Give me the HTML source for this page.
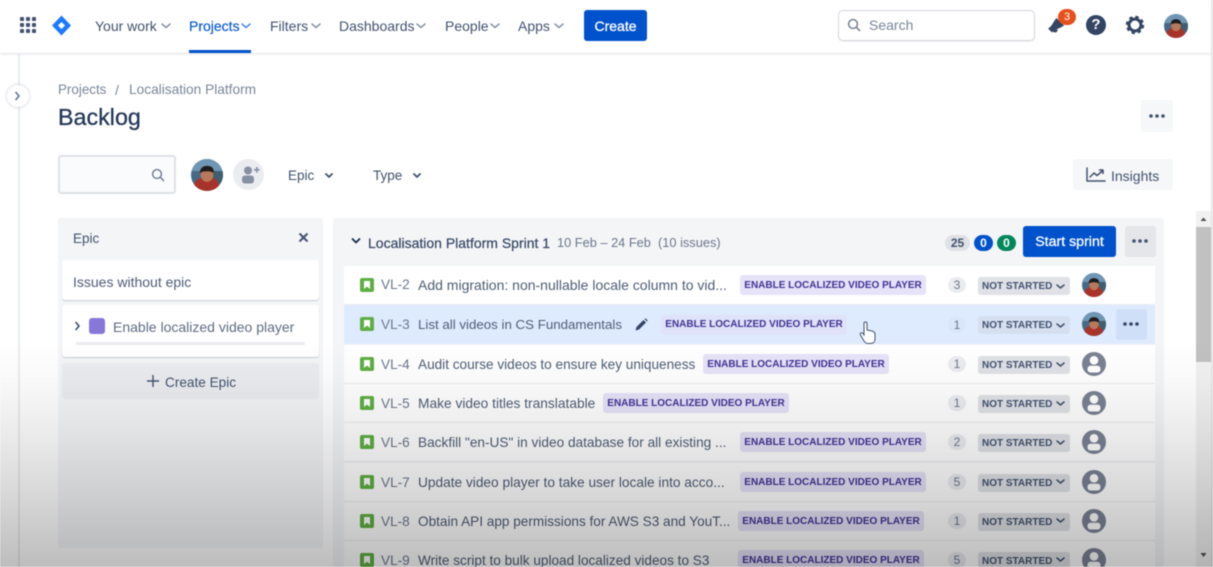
<!DOCTYPE html>
<html><head><meta charset="utf-8">
<style>
html,body{margin:0;padding:0;width:1213px;height:567px;overflow:hidden;background:#fff}
body{font-family:"Liberation Sans",sans-serif;color:#42526e;position:relative}
#p{position:absolute;left:0;top:0;width:1213px;height:567px;overflow:hidden;filter:blur(.4px)}
.a{position:absolute;white-space:nowrap}
.n{top:18px;font-size:14px;line-height:16px;color:#42526e}
.row{position:absolute;left:344px;width:811px;height:38px;background:#fff;border-bottom:1px solid #ebecf0}
.row>*{position:absolute;white-space:nowrap}
.ic{left:16px;top:12px;width:14px;height:14px;background:#5fae43;border-radius:2px}
.ic:after{content:"";position:absolute;left:4px;top:3px;width:6px;height:8px;background:#fff;clip-path:polygon(0 0,100% 0,100% 100%,50% 70%,0 100%)}
.k{left:37px;top:12px;font-size:13.6px;line-height:16px;color:#6b778c}
.t{left:74px;top:12px;font-size:13.7px;line-height:16px;color:#4f5d75}
.g{top:9px;height:20px;width:186px;background:#e6e2f8;border-radius:3px;font-size:10px;font-weight:bold;line-height:22px;color:#403294;text-align:center}
.e{left:604px;top:11px;width:18px;height:16px;background:#ebecf0;border-radius:8px;font-size:12px;line-height:16px;text-align:center;color:#6b778c}
.s{left:634px;top:11px;width:92px;height:18px;background:#dfe1e6;border-radius:3px;font-size:10px;font-weight:bold;line-height:20px;color:#42526e;padding-left:4px;box-sizing:border-box}
.av{left:738px;top:7px;width:24px;height:24px}
svg{display:block}
</style></head><body>
<div id="p">

<!-- top nav -->
<div class="a" style="left:0;top:0;width:1213px;height:53px;background:#fff;border-bottom:1px solid #e6e8ec;box-shadow:0 1px 2px rgba(9,30,66,.06)"></div>
<svg class="a" style="left:20px;top:17px" width="16" height="16" viewBox="0 0 16 16" fill="#42526e"><rect x="0" y="0" width="4" height="4" rx="1"/><rect x="6" y="0" width="4" height="4" rx="1"/><rect x="12" y="0" width="4" height="4" rx="1"/><rect x="0" y="6" width="4" height="4" rx="1"/><rect x="6" y="6" width="4" height="4" rx="1"/><rect x="12" y="6" width="4" height="4" rx="1"/><rect x="0" y="12" width="4" height="4" rx="1"/><rect x="6" y="12" width="4" height="4" rx="1"/><rect x="12" y="12" width="4" height="4" rx="1"/></svg>
<svg class="a" style="left:51px;top:15px" width="21" height="21" viewBox="0 0 21 21"><path d="M10.500 0.500L20 10.500L10.500 20.500L1 10.500Z" fill="#1d7afc"/><path d="M10.500 7L14 10.500L10.500 14L7 10.500Z" fill="#fff"/></svg>

<span class="a n" style="left:95px">Your work</span>
<span class="a n" style="left:189px;color:#0b5ccb;-webkit-text-stroke:.2px #0b5ccb">Projects</span>
<span class="a n" style="left:270px">Filters</span>
<span class="a n" style="left:339px">Dashboards</span>
<span class="a n" style="left:445px">People</span>
<span class="a n" style="left:518px">Apps</span>
<svg class="a" style="left:0;top:0" width="600" height="54" fill="none" stroke-width="1.500" stroke-linecap="round" stroke-linejoin="round">
<path d="M162 24l4 3.500 4-3.500M312 24l4 3.500 4-3.500M417 24l4 3.500 4-3.500M491 24l4 3.500 4-3.500M555 24l4 3.500 4-3.500" stroke="#8993a4"/>
<path d="M242 24l4 3.500 4-3.500" stroke="#4c8ae0"/>
</svg>
<div class="a" style="left:189px;top:50px;width:62px;height:3px;background:#0052cc"></div>
<div class="a" style="left:584px;top:10px;width:63px;height:31px;background:#0052cc;border-radius:3px;color:#fff;font-size:14px;-webkit-text-stroke:.3px #fff;line-height:32px;text-align:center">Create</div>

<!-- search -->
<div class="a" style="left:838px;top:10px;width:195px;height:29px;border:1px solid #d3d6dc;border-radius:5px;box-shadow:0 1px 1px rgba(9,30,66,.06)"></div>
<svg class="a" style="left:847px;top:18px" width="14" height="14" viewBox="0 0 14 14" fill="none" stroke="#6b778c" stroke-width="1.400"><circle cx="6" cy="6" r="4.400"/><path d="M9.400 9.400L13 13"/></svg>
<span class="a" style="left:869px;top:17px;font-size:14px;line-height:16px;color:#7a869a">Search</span>

<!-- right icons -->
<svg class="a" style="left:1047px;top:14px" width="20" height="21" viewBox="0 0 20 21"><path d="M1 14.500C4.500 13 6 8 9.500 4L17 11.500C13 14.500 8 15 5 18.500Z" fill="#344563"/><path d="M6.500 18a2.600 2.600 0 0 0 4-2.800L6 16.500Z" fill="#344563"/></svg>
<div class="a" style="left:1058px;top:9px;width:18px;height:16px;background:#e5501b;border-radius:8px;color:#fff;font-size:11px;line-height:16px;text-align:center">3</div>
<div class="a" style="left:1086px;top:15px;width:20px;height:20px;background:#344563;border-radius:50%;color:#fff;font-size:15px;font-weight:bold;line-height:20px;text-align:center">?</div>
<svg class="a" style="left:1125px;top:15px" width="20" height="20" viewBox="0 0 20 20" fill="none" stroke="#344563"><circle cx="10" cy="10" r="6" stroke-width="3"/><circle cx="10" cy="10" r="8" stroke-width="2.400" stroke-dasharray="3.300 3"/></svg>
<svg class="a" style="left:1164px;top:14px" width="24" height="24" viewBox="0 0 24 24"><use href="#face"/></svg>

<!-- left sidebar rail -->
<div class="a" style="left:18px;top:54px;width:2px;height:513px;background:#ebecf0"></div>
<div class="a" style="left:7px;top:85px;width:22px;height:22px;background:#fff;border-radius:50%;box-shadow:0 0 3px rgba(9,30,66,.25)"></div>
<svg class="a" style="left:14px;top:91px" width="8" height="10" fill="none" stroke="#6b778c" stroke-width="1.700" stroke-linecap="round" stroke-linejoin="round"><path d="M2 1.500l3 3.500-3 3.500"/></svg>

<!-- heading -->
<span class="a" style="left:58px;top:82px;font-size:13.400px;line-height:16px;color:#7a869a">Projects</span>
<span class="a" style="left:115px;top:82px;font-size:14px;line-height:16px;color:#7a869a">/</span>
<span class="a" style="left:129px;top:82px;font-size:13.700px;line-height:16px;color:#7a869a">Localisation Platform</span>
<span class="a" style="left:58px;top:103px;font-size:23.300px;line-height:28px;color:#253858;-webkit-text-stroke:.3px #253858">Backlog</span>
<div class="a" style="left:1141px;top:100px;width:32px;height:32px;background:#f6f7f8;border-radius:3px"></div>
<svg class="a" style="left:1148px;top:113px" width="18" height="6" fill="#42526e"><circle cx="3" cy="3" r="1.800"/><circle cx="9" cy="3" r="1.800"/><circle cx="15" cy="3" r="1.800"/></svg>

<!-- filter bar -->
<div class="a" style="left:58px;top:155px;width:114px;height:35px;background:#fafbfc;border:2px solid #dfe1e6;border-radius:3px"></div>
<svg class="a" style="left:151px;top:168px" width="14" height="14" viewBox="0 0 14 14" fill="none" stroke="#6b778c" stroke-width="1.400"><circle cx="6" cy="6" r="4.400"/><path d="M9.400 9.400L13 13"/></svg>
<svg class="a" style="left:191px;top:159px" width="32" height="32" viewBox="0 0 24 24"><use href="#face"/></svg>
<div class="a" style="left:233px;top:159px;width:31px;height:31px;background:#ebecf0;border-radius:50%"></div>
<svg class="a" style="left:240px;top:166px" width="20" height="18" viewBox="0 0 20 18" fill="#8590a2"><circle cx="8" cy="4.500" r="4"/><rect x="2" y="9.500" width="12" height="8" rx="3"/><path d="M14 3h2V1h1.600v2h2v1.600h-2v2H16v-2h-2z"/></svg>
<span class="a" style="left:288px;top:168px;font-size:13.500px;line-height:16px;color:#42526e">Epic</span>
<span class="a" style="left:373px;top:168px;font-size:13.500px;line-height:16px;color:#42526e">Type</span>
<svg class="a" style="left:0;top:150px" width="440" height="50" fill="none" stroke="#42526e" stroke-width="1.800" stroke-linecap="round" stroke-linejoin="round"><path d="M326 24l3 3 3-3M414 24l3 3 3-3"/></svg>
<div class="a" style="left:1073px;top:159px;width:100px;height:31px;background:#f6f7f8;border-radius:3px"></div>
<svg class="a" style="left:1086px;top:167px" width="20" height="16" viewBox="0 0 20 16" fill="none" stroke="#42526e" stroke-width="1.500" stroke-linejoin="round" stroke-linecap="round"><path d="M1 1v13h18M4 10l4-4 3 2.500 6-5M13.500 3h3.500v3.500"/></svg>
<span class="a" style="left:1111px;top:168px;font-size:14px;line-height:16px;color:#42526e">Insights</span>

<!-- epic panel -->
<div class="a" style="left:58px;top:218px;width:265px;height:330px;background:#f4f5f7;border-radius:3px"></div>
<span class="a" style="left:73px;top:231px;font-size:13.500px;line-height:16px;color:#42526e">Epic</span>
<svg class="a" style="left:298px;top:232px" width="11" height="11" fill="none" stroke="#42526e" stroke-width="2"><path d="M1.500 1.500l8 8M9.500 1.500l-8 8"/></svg>
<div class="a" style="left:62px;top:260px;width:257px;height:40px;background:#fff;border-radius:3px;box-shadow:0 1px 1px rgba(9,30,66,.2)"></div>
<span class="a" style="left:73px;top:274px;font-size:14px;line-height:16px;color:#4f5d75">Issues without epic</span>
<div class="a" style="left:62px;top:305px;width:257px;height:52px;background:#fff;border-radius:3px;box-shadow:0 1px 1px rgba(9,30,66,.2)"></div>
<svg class="a" style="left:74px;top:321px" width="8" height="10" fill="none" stroke="#42526e" stroke-width="1.700" stroke-linecap="round" stroke-linejoin="round"><path d="M2 1.500l3 3.500-3 3.500"/></svg>
<div class="a" style="left:89px;top:318px;width:16px;height:16px;background:#8777d9;border-radius:3px"></div>
<span class="a" style="left:113px;top:319px;font-size:14px;line-height:16px;color:#5e6c84">Enable localized video player</span>
<div class="a" style="left:76px;top:342px;width:229px;height:3px;background:#ebecf0;border-radius:2px"></div>
<div class="a" style="left:62px;top:363px;width:257px;height:36px;background:#ebecf0;border-radius:3px"></div>
<svg class="a" style="left:147px;top:375px" width="12" height="12" fill="none" stroke="#42526e" stroke-width="1.400"><path d="M6 0v12M0 6h12"/></svg>
<span class="a" style="left:165px;top:375px;font-size:13.600px;line-height:16px;color:#42526e">Create Epic</span>

<!-- sprint panel -->
<div class="a" style="left:333px;top:218px;width:831px;height:349px;background:#f4f5f7;border-radius:3px"></div>
<svg class="a" style="left:351px;top:237px" width="10" height="8" fill="none" stroke="#172b4d" stroke-width="1.800" stroke-linecap="round" stroke-linejoin="round"><path d="M1.500 2l3.500 3.500L8.500 2"/></svg>
<span class="a" style="left:368px;top:235px;font-size:14px;line-height:16px;color:#344563;-webkit-text-stroke:.2px #344563">Localisation Platform Sprint 1</span>
<span class="a" style="left:557px;top:235px;font-size:12.800px;line-height:16px;color:#6b778c">10 Feb – 24 Feb&nbsp; (10 issues)</span>
<div class="a" style="left:945px;top:235px;width:25px;height:16px;background:#dfe1e6;border-radius:8px;font-size:12px;font-weight:bold;line-height:16px;text-align:center;color:#42526e">25</div>
<div class="a" style="left:974px;top:235px;width:19px;height:16px;background:#0052cc;border-radius:8px;font-size:12px;font-weight:bold;line-height:16px;text-align:center;color:#fff">0</div>
<div class="a" style="left:997px;top:235px;width:19px;height:16px;background:#00875a;border-radius:8px;font-size:12px;font-weight:bold;line-height:16px;text-align:center;color:#fff">0</div>
<div class="a" style="left:1023px;top:226px;width:93px;height:31px;background:#0052cc;border-radius:3px;color:#fff;font-size:14.200px;-webkit-text-stroke:.3px #fff;line-height:32px;text-align:center">Start sprint</div>
<div class="a" style="left:1125px;top:226px;width:31px;height:31px;background:#e4e6ea;border-radius:3px"></div>
<svg class="a" style="left:1131px;top:238px" width="18" height="6" fill="#42526e"><circle cx="3" cy="3" r="1.800"/><circle cx="9" cy="3" r="1.800"/><circle cx="15" cy="3" r="1.800"/></svg>

<!-- rows -->
<div class="row" style="top:266px"><i class="ic"></i><span class="k" style="top:11px">VL-2</span><span class="t" style="font-size:14px;top:11px">Add migration: non-nullable locale column to vid...</span><span class="g" style="left:396px">ENABLE LOCALIZED VIDEO PLAYER</span><span class="e">3</span><span class="s">NOT STARTED</span><svg class="av" viewBox="0 0 24 24"><use href="#face"/></svg></div>
<div class="row" style="top:305px;background:#deebff;height:39px;border:0"><i class="ic"></i><span class="k">VL-3</span><span class="t" style="font-size:13.300px">List all videos in CS Fundamentals</span><svg style="left:291px;top:13px" width="13" height="13" viewBox="0 0 13 13" fill="#344563"><path d="M0.500 12.500L1.500 9L8.500 2L11 4.500L4 11.500Z"/><path d="M9.500 1L10.500 0.200L12.800 2.500L12 3.500Z"/></svg><span class="g" style="left:317px;background:#dfe2f8;top:10px;line-height:20px">ENABLE LOCALIZED VIDEO PLAYER</span><span class="e" style="background:#d9e5f8;top:12px">1</span><span class="s" style="background:#d5dfef;top:11px">NOT STARTED</span><svg class="av" viewBox="0 0 24 24"><use href="#face"/></svg><div style="left:772px;top:4px;width:31px;height:31px;background:#cfdff7;border-radius:3px"></div><svg style="left:778px;top:16px" width="18" height="6" fill="#344563"><circle cx="3" cy="3" r="1.800"/><circle cx="9" cy="3" r="1.800"/><circle cx="15" cy="3" r="1.800"/></svg></div>
<div class="row" style="top:345px"><i class="ic"></i><span class="k">VL-4</span><span class="t" style="font-size:13.600px">Audit course videos to ensure key uniqueness</span><span class="g" style="left:359px">ENABLE LOCALIZED VIDEO PLAYER</span><span class="e">1</span><span class="s">NOT STARTED</span><svg class="av" viewBox="0 0 24 24"><use href="#user"/></svg></div>
<div class="row" style="top:384px"><i class="ic"></i><span class="k">VL-5</span><span class="t" style="font-size:13.750px">Make video titles translatable</span><span class="g" style="left:259px">ENABLE LOCALIZED VIDEO PLAYER</span><span class="e">1</span><span class="s">NOT STARTED</span><svg class="av" viewBox="0 0 24 24"><use href="#user"/></svg></div>
<div class="row" style="top:423px"><i class="ic"></i><span class="k">VL-6</span><span class="t" style="font-size:13.650px">Backfill "en-US" in video database for all existing ...</span><span class="g" style="left:396px">ENABLE LOCALIZED VIDEO PLAYER</span><span class="e">2</span><span class="s">NOT STARTED</span><svg class="av" viewBox="0 0 24 24"><use href="#user"/></svg></div>
<div class="row" style="top:463px"><i class="ic"></i><span class="k">VL-7</span><span class="t">Update video player to take user locale into acco...</span><span class="g" style="left:396px">ENABLE LOCALIZED VIDEO PLAYER</span><span class="e">5</span><span class="s">NOT STARTED</span><svg class="av" viewBox="0 0 24 24"><use href="#user"/></svg></div>
<div class="row" style="top:502px"><i class="ic"></i><span class="k">VL-8</span><span class="t" style="font-size:13.600px">Obtain API app permissions for AWS S3 and YouT...</span><span class="g" style="left:394px">ENABLE LOCALIZED VIDEO PLAYER</span><span class="e">1</span><span class="s">NOT STARTED</span><svg class="av" viewBox="0 0 24 24"><use href="#user"/></svg></div>
<div class="row" style="top:541px"><i class="ic"></i><span class="k">VL-9</span><span class="t" style="font-size:13.600px">Write script to bulk upload localized videos to S3</span><span class="g" style="left:394px">ENABLE LOCALIZED VIDEO PLAYER</span><span class="e">5</span><span class="s">NOT STARTED</span><svg class="av" viewBox="0 0 24 24"><use href="#user"/></svg></div>

<!-- status chevrons -->
<svg class="a" style="left:1050px;top:270px" width="20" height="297" fill="none" stroke="#42526e" stroke-width="1.500" stroke-linecap="round" stroke-linejoin="round"><path d="M7 15l3.500 3 3.500-3M7 54l3.500 3 3.500-3M7 93l3.500 3 3.500-3M7 132l3.500 3 3.500-3M7 171l3.500 3 3.500-3M7 210l3.500 3 3.500-3M7 249l3.500 3 3.500-3M7 288l3.500 3 3.500-3"/></svg>

<!-- cursor -->
<svg class="a" style="left:859px;top:321px" width="18" height="24" viewBox="0 0 18 24"><path d="M5 2.500c0-2 3-2 3 0V9l5 1c2 .5 3 1.500 3 3.500V18c0 3-2 4.500-4.500 4.500H9C7 22.500 6 21.500 5 20L1.500 14c-1-2 1-3 2.500-1.500L5 14Z" fill="#fff" stroke="#42526e" stroke-width="1"/></svg>

<!-- scrollbar -->
<div class="a" style="left:1196px;top:211px;width:15px;height:356px;background:#f1f1f1"></div>
<div class="a" style="left:1196px;top:227px;width:15px;height:135px;background:#c1c1c1"></div>
<svg class="a" style="left:1196px;top:211px" width="15" height="356" fill="#505050"><path d="M4.500 10L7.500 6.500L10.500 10Z"/><path d="M4.500 342L7.500 346L10.500 342Z"/></svg>

<!-- right edge line -->
<div class="a" style="left:1211px;top:0;width:2px;height:567px;background:#e6e6e6"></div>

<!-- video bottom shade -->
<div class="a" style="left:0;top:0;width:1213px;height:567px;pointer-events:none;background:linear-gradient(to bottom,rgba(0,0,0,0) 340px,rgba(0,0,0,.025) 380px,rgba(0,0,0,.075) 430px,rgba(0,0,0,.15) 490px,rgba(0,0,0,.26) 567px)"></div>
</div>

<svg width="0" height="0" style="position:absolute">
<defs>
<clipPath id="cc"><circle cx="12" cy="12" r="12"/></clipPath>
<g id="face" clip-path="url(#cc)">
<rect width="24" height="24" fill="#456a86"/>
<path d="M0 9C2 3 7 0 12 0c5 0 10 3 12 9z" fill="#6f96b4"/>
<path d="M16 9h8v9h-6z" fill="#3f5f6e"/>
<path d="M2 20c1-4 4-6 7-6h6c3 0 5 2 6 6v4H3z" fill="#a8332a"/>
<ellipse cx="12" cy="12" rx="4.800" ry="5.200" fill="#b9785a"/>
<path d="M6.800 10.500C6.500 7 9 5 12.500 5.200S17.500 7.500 17 10.500C15 8.800 9 8.800 6.800 10.500z" fill="#211c1c"/>
</g>
<g id="user">
<circle cx="12" cy="12" r="12" fill="#7a8294"/>
<circle cx="12" cy="8.300" r="4.300" fill="#fff"/>
<rect x="5.500" y="13.800" width="13" height="6.700" rx="3" fill="#fff"/>
</g>
</defs>
</svg>
</body></html>
